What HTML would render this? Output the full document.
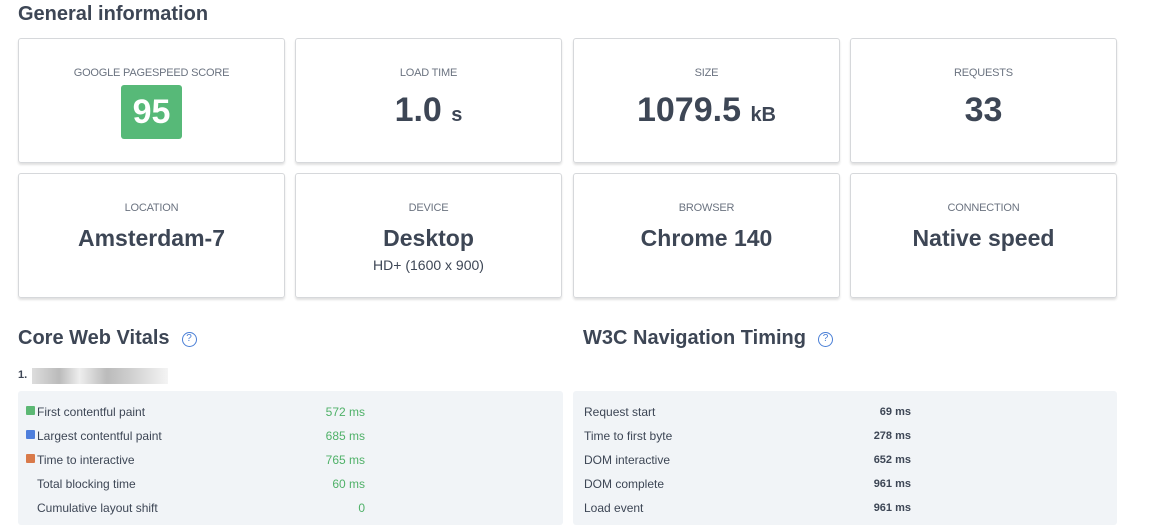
<!DOCTYPE html>
<html><head><style>
*{margin:0;padding:0;box-sizing:border-box}
body{width:1159px;height:525px;background:#fff;font-family:"Liberation Sans",sans-serif;color:#3d4655;position:relative;overflow:hidden}
h2{position:absolute;font-size:20px;font-weight:bold;color:#3d4655}
.card{position:absolute;width:267px;height:125px;border:1px solid #d6d8db;border-radius:3px;box-shadow:0 2px 2px rgba(0,0,0,.12);text-align:center}
.lab{position:absolute;top:28px;left:0;right:0;font-size:11px;letter-spacing:-0.2px;color:#6b7380}
.val{position:absolute;top:52px;left:0;right:0;font-size:34px;font-weight:bold;color:#3d4655}
.val small{font-size:20px}
.v2{position:absolute;top:51px;left:0;right:0;font-size:23px;font-weight:bold}
.sub{position:absolute;top:83px;left:0;right:0;font-size:14px;color:#3d4655}
.score{position:absolute;left:102px;top:46px;width:61px;height:54px;background:#57b978;border-radius:3px;color:#fff;font-size:34px;font-weight:bold;line-height:54px}
.panel{position:absolute;top:391px;height:134px;background:#f1f4f7;border-radius:3px}
.row{position:absolute;font-size:12px;color:#3d4655}
.g{color:#4fb168}
.b{font-weight:bold;font-size:11px;margin-top:1px}
.q{display:inline-block;width:15px;height:15px;border:1.5px solid #4a7fd6;border-radius:50%;color:#4a7fd6;font-size:10px;line-height:12px;text-align:center;font-weight:normal;vertical-align:3px;margin-left:12px}
.sq{position:absolute;width:9px;height:9px;border-radius:1px}
</style></head><body>
<h2 style="left:18px;top:3px">General information</h2>
<div class="card" style="left:18px;top:38px"><div class="lab">GOOGLE PAGESPEED SCORE</div><div class="score">95</div></div>
<div class="card" style="left:295px;top:38px"><div class="lab">LOAD TIME</div><div class="val">1.0 <small>s</small></div></div>
<div class="card" style="left:573px;top:38px"><div class="lab">SIZE</div><div class="val">1079.5 <small>kB</small></div></div>
<div class="card" style="left:850px;top:38px"><div class="lab">REQUESTS</div><div class="val">33</div></div>
<div class="card" style="left:18px;top:173px"><div class="lab">LOCATION</div><div class="v2">Amsterdam-7</div></div>
<div class="card" style="left:295px;top:173px"><div class="lab">DEVICE</div><div class="v2">Desktop</div><div class="sub">HD+ (1600 x 900)</div></div>
<div class="card" style="left:573px;top:173px"><div class="lab">BROWSER</div><div class="v2">Chrome 140</div></div>
<div class="card" style="left:850px;top:173px"><div class="lab">CONNECTION</div><div class="v2">Native speed</div></div>
<h2 style="left:18px;top:327px">Core Web Vitals<span class="q">?</span></h2>
<h2 style="left:583px;top:327px">W3C Navigation Timing<span class="q">?</span></h2>
<div class="row" style="left:18px;top:369px;font-weight:bold;font-size:11px">1.</div>
<div style="position:absolute;left:32px;top:368px;width:136px;height:16px;background:linear-gradient(90deg,#ddd,#bbb 20%,#eee 35%,#bbb 55%,#ccc 70%,#f4f4f4)"></div>
<div class="panel" style="left:18px;width:545px"></div>
<div class="panel" style="left:573px;width:544px"></div>
<div class="sq" style="left:26px;top:406px;background:#5cb874"></div>
<div class="sq" style="left:26px;top:430px;background:#4f7fdc"></div>
<div class="sq" style="left:26px;top:454px;background:#d97a4a"></div>
<div class="row" style="left:37px;top:405px">First contentful paint</div>
<div class="row" style="left:37px;top:429px">Largest contentful paint</div>
<div class="row" style="left:37px;top:453px">Time to interactive</div>
<div class="row" style="left:37px;top:477px">Total blocking time</div>
<div class="row" style="left:37px;top:501px">Cumulative layout shift</div>
<div class="row g" style="right:794px;top:405px">572 ms</div>
<div class="row g" style="right:794px;top:429px">685 ms</div>
<div class="row g" style="right:794px;top:453px">765 ms</div>
<div class="row g" style="right:794px;top:477px">60 ms</div>
<div class="row g" style="right:794px;top:501px">0</div>
<div class="row" style="left:584px;top:405px">Request start</div>
<div class="row" style="left:584px;top:429px">Time to first byte</div>
<div class="row" style="left:584px;top:453px">DOM interactive</div>
<div class="row" style="left:584px;top:477px">DOM complete</div>
<div class="row" style="left:584px;top:501px">Load event</div>
<div class="row b" style="right:248px;top:405px">69 ms</div>
<div class="row b" style="right:248px;top:429px">278 ms</div>
<div class="row b" style="right:248px;top:453px">652 ms</div>
<div class="row b" style="right:248px;top:477px">961 ms</div>
<div class="row b" style="right:248px;top:501px">961 ms</div>
</body></html>
